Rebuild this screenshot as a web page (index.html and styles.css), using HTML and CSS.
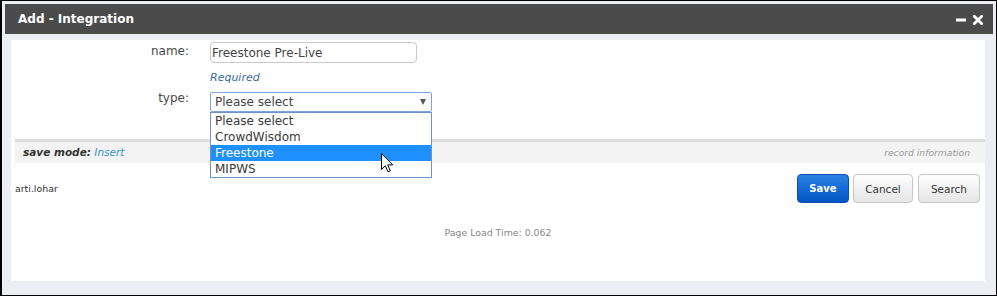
FILE: index.html
```html
<!DOCTYPE html>
<html>
<head>
<meta charset="utf-8">
<link rel="stylesheet" href="styles.css">
</head>
<body>
<div class="window">
  <div class="titlebar">
    <span class="title">Add - Integration</span>
    <div class="controls">
      <svg class="ico ico-min" width="11" height="10" viewBox="0 0 11 10"><rect x="0" y="3.5" width="10" height="3" fill="#fff"/></svg>
      <svg class="ico ico-close" width="10" height="10" viewBox="0 0 10 10"><path d="M1.3 1.3 L8.7 8.7 M8.7 1.3 L1.3 8.7" stroke="#fff" stroke-width="2.8" stroke-linecap="square"/></svg>
    </div>
  </div>
  <div class="content">
    <div class="form">
      <div class="row">
        <label class="lbl lbl-name">name:</label>
        <div class="field">
          <div class="input">Freestone Pre-Live</div>
          <div class="hint">Required</div>
        </div>
      </div>
      <div class="row row-type">
        <label class="lbl">type:</label>
        <div class="field">
          <div class="select"><span>Please select</span><span class="arrow"></span></div>
        </div>
      </div>
    </div>
    <div class="modebar">
      <div class="mode"><b>save mode:</b> <span class="mode-val">Insert</span></div>
      <div class="recinfo">record information</div>
    </div>
    <div class="footer">
      <span class="user">arti.lohar</span>
      <div class="buttons">
        <button class="btn btn-primary">Save</button>
        <button class="btn">Cancel</button>
        <button class="btn">Search</button>
      </div>
    </div>
    <div class="loadtime">Page Load Time: 0.062</div>

    <ul class="dropdown">
      <li>Please select</li>
      <li>CrowdWisdom</li>
      <li class="active">Freestone</li>
      <li>MIPWS</li>
    </ul>
    <svg class="cursor" width="13" height="20" viewBox="0 0 13 20"><path d="M0.5 0.5 L0.5 16.5 L4.3 12.8 L7 18.8 L9.3 17.8 L6.7 11.9 L11.7 11.9 Z" fill="#fff" stroke="#000" stroke-width="1" stroke-linejoin="miter"/></svg>
  </div>
</div>
</body>
</html>
```

FILE: styles.css
```css
* { box-sizing: border-box; }
html, body { margin: 0; padding: 0; }
body {
  width: 997px;
  height: 296px;
  background: #000;
  font-family: "DejaVu Sans", Verdana, sans-serif;
}
.window {
  width: 997px;
  height: 296px;
  border-style: solid;
  border-color: #000;
  border-width: 1px 1px 1px 2px;
  background: #ebeef3;
  padding: 3px 3px 0 3px;
}
.titlebar {
  height: 30px;
  background: #4b4b4b;
  display: flex;
  align-items: center;
  justify-content: space-between;
  padding: 0 10px 0 13px;
}
.title {
  color: #fff;
  font-weight: bold;
  font-size: 12px;
  line-height: 30px;
}
.controls {
  display: flex;
  align-items: center;
  gap: 6px;
  margin-top: 1px;
}
.ico { display: block; }
.content {
  position: relative;
  margin: 6px 8px 0 6px;
  height: 241px;
  background: #fff;
  padding-top: 2px;
}
.row {
  display: grid;
  grid-template-columns: 178px 1fr;
  column-gap: 21px;
}
.row-type { margin-top: 8px; }
.lbl {
  text-align: right;
  font-size: 12px;
  line-height: 12px;
  color: #4a4a4a;
}
.lbl-name { padding-top: 3px; }
.input {
  width: 207px;
  height: 21px;
  border: 1px solid #c9c9c9;
  border-radius: 4px;
  padding: 1px 0 0 1px;
  font-size: 12px;
  line-height: 19px;
  color: #444;
  white-space: nowrap;
}
.hint {
  margin-top: 8px;
  font-size: 11px;
  line-height: 13px;
  font-style: italic;
  color: #3a6c9e;
}
.select {
  width: 222px;
  height: 20px;
  border: 1px solid #7ea6dc;
  border-radius: 2px;
  padding: 0 5px 0 4px;
  font-size: 12px;
  line-height: 18px;
  color: #444;
  display: flex;
  justify-content: space-between;
  align-items: center;
}
.arrow {
  width: 0;
  height: 0;
  border-left: 3.5px solid transparent;
  border-right: 3.5px solid transparent;
  border-top: 6px solid #555;
}
.modebar {
  margin: 27px 0 0 4px;
  border-top: 3px solid #dcdcdc;
  background: #f3f3f3;
  height: 24px;
  display: flex;
  justify-content: space-between;
  align-items: center;
  padding: 0 15px 0 8px;
  line-height: 21px;
}
.mode {
  font-size: 10.5px;
  font-style: italic;
  color: #333;
}
.mode b { font-weight: bold; }
.mode-val { color: #3597c4; }
.recinfo {
  font-size: 9.2px;
  font-style: italic;
  color: #999;
}
.footer {
  margin: 11px 5px 0 4px;
  display: flex;
  justify-content: space-between;
  align-items: center;
}
.user {
  font-size: 9.4px;
  line-height: 12px;
  color: #333;
}
.buttons {
  display: flex;
  gap: 4px;
}
.btn {
  height: 29px;
  width: 60px;
  border: 1px solid #c6c6c6;
  border-radius: 4px;
  background: linear-gradient(#fefefe, #e5e5e5);
  font-family: "DejaVu Sans", Verdana, sans-serif;
  font-size: 10.5px;
  color: #333;
  padding: 0;
}
.btn:last-child { width: 62px; margin-left: 1px; }
.btn-primary {
  width: 52px;
  border-color: #0a4fb0;
  background: linear-gradient(#2b82e4, #0054c4);
  color: #fff;
  font-weight: bold;
  font-size: 10px;
}
.loadtime {
  margin-top: 24px;
  text-align: center;
  font-size: 9.4px;
  line-height: 12px;
  color: #888;
}
.dropdown {
  position: absolute;
  left: 199px;
  top: 72px;
  width: 222px;
  margin: 0;
  padding: 0;
  list-style: none;
  border: 1px solid #7093c6;
  background: #fff;
}
.dropdown li {
  height: 16px;
  line-height: 16px;
  padding-left: 4px;
  font-size: 12px;
  color: #3a3a3a;
}
.dropdown li.active {
  background: #1e90ff;
  color: #fff;
}
.cursor {
  position: absolute;
  left: 370px;
  top: 113px;
}
```
